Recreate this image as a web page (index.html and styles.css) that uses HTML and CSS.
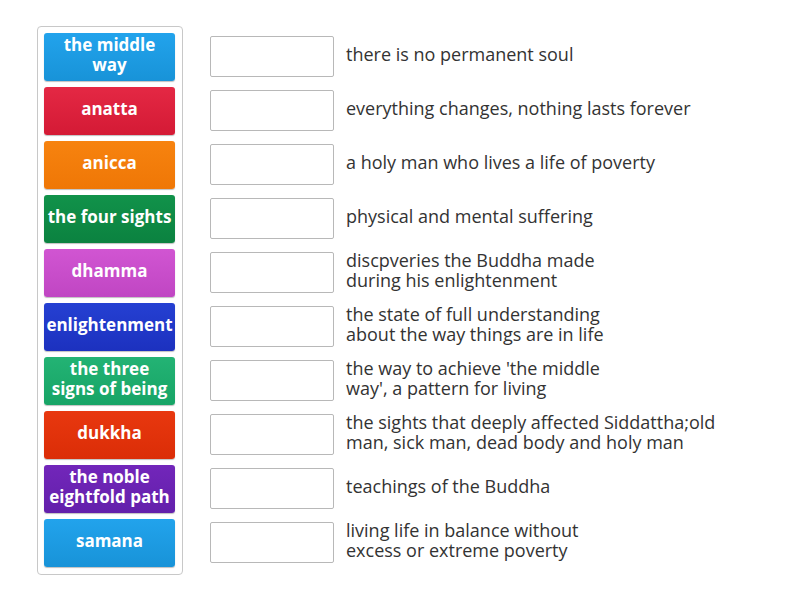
FILE: index.html
```html
<!DOCTYPE html>
<html>
<head>
<meta charset="utf-8">
<link rel="stylesheet" href="styles.css">
</head>
<body>
<div class="page">
  <div class="tiles">
    <div class="tile c-blue">the middle way</div>
    <div class="tile c-red">anatta</div>
    <div class="tile c-orange">anicca</div>
    <div class="tile c-green">the four sights</div>
    <div class="tile c-pink">dhamma</div>
    <div class="tile c-navy">enlightenment</div>
    <div class="tile c-teal">the three signs of being</div>
    <div class="tile c-scarlet">dukkha</div>
    <div class="tile c-purple">the noble eightfold path</div>
    <div class="tile c-blue">samana</div>
  </div>
  <div class="rows">
    <div class="row"><div class="slot"></div><div class="def">there is no permanent soul</div></div>
    <div class="row"><div class="slot"></div><div class="def">everything changes, nothing lasts forever</div></div>
    <div class="row"><div class="slot"></div><div class="def">a holy man who lives a life of poverty</div></div>
    <div class="row"><div class="slot"></div><div class="def">physical and mental suffering</div></div>
    <div class="row"><div class="slot"></div><div class="def">discpveries the Buddha made<br>during his enlightenment</div></div>
    <div class="row"><div class="slot"></div><div class="def">the state of full understanding<br>about the way things are in life</div></div>
    <div class="row"><div class="slot"></div><div class="def">the way to achieve 'the middle<br>way', a pattern for living</div></div>
    <div class="row"><div class="slot"></div><div class="def">the sights that deeply affected Siddattha;old<br>man, sick man, dead body and holy man</div></div>
    <div class="row"><div class="slot"></div><div class="def">teachings of the Buddha</div></div>
    <div class="row"><div class="slot"></div><div class="def">living life in balance without<br>excess or extreme poverty</div></div>
  </div>
</div>
</body>
</html>
```
FILE: styles.css
```css
html, body {
  margin: 0;
  padding: 0;
  background: #fff;
}
.page {
  display: flex;
  align-items: flex-start;
  padding: 26px 0 0 37px;
  font-family: "Open Sans", "Noto Sans", sans-serif;
}
.tiles {
  display: flex;
  flex-direction: column;
  gap: 6px;
  width: 131px;
  padding: 6px 7px 7px 6px;
  border: 1px solid #c8c8c8;
  border-radius: 4px;
}
.tile {
  box-sizing: border-box;
  height: 48px;
  border-radius: 3px;
  display: flex;
  align-items: center;
  justify-content: center;
  text-align: center;
  color: #fff;
  font-weight: 700;
  font-size: 17px;
  line-height: 20px;
  box-shadow: 0 1px 1px rgba(0,0,0,0.25);
  padding: 0 3px 5px;
}
.c-blue { background: linear-gradient(#22a3ec, #1893d8); }
.c-red { background: linear-gradient(#e42844, #d41a35); }
.c-orange { background: linear-gradient(#f7830f, #ef7706); }
.c-green { background: linear-gradient(#11924a, #0b8240); }
.c-pink { background: linear-gradient(#d155d2, #c046c3); }
.c-navy { background: linear-gradient(#2540d2, #1c31bf); }
.c-teal { background: linear-gradient(#23b374, #17a466); }
.c-scarlet { background: linear-gradient(#e8380f, #db2d07); }
.c-purple { background: linear-gradient(#7226ba, #6320ab); }
.rows {
  display: flex;
  flex-direction: column;
  gap: 13px;
  margin-left: 27px;
  padding-top: 10px;
}
.row {
  display: flex;
  align-items: center;
  height: 41px;
}
.slot {
  width: 122px;
  height: 39px;
  border: 1px solid #b8b8b8;
  border-radius: 2px;
  flex: none;
}
.def {
  margin-left: 12px;
  padding-bottom: 5px;
  font-size: 18px;
  line-height: 20px;
  color: #333;
  white-space: nowrap;
}
```
